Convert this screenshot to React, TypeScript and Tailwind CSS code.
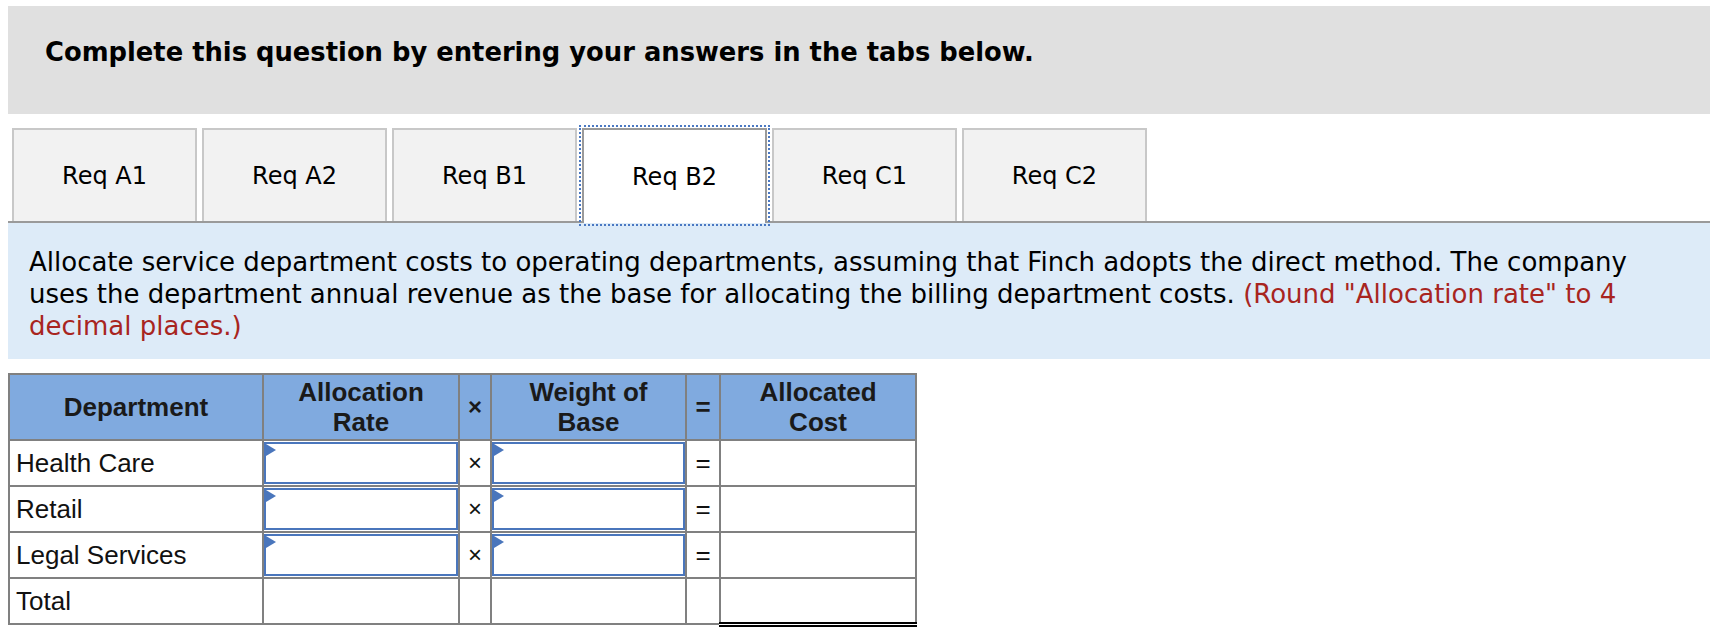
import { useState } from "react";

const tabs = ["Req A1", "Req A2", "Req B1", "Req B2", "Req C1", "Req C2"];
const rows = ["Health Care", "Retail", "Legal Services"];

const tahoma = { fontFamily: '"DejaVu Sans", Tahoma, sans-serif' };

function Flag() {
  return (
    <span className="absolute left-0 top-0 w-0 h-0 border-y-[6px] border-y-transparent border-l-[10px] border-l-[#4a76bc]" />
  );
}

function InputCell() {
  return (
    <td className="p-0 border-2 border-[#808080]">
      <div className="relative h-[42px] border-2 border-[#4a76bc] bg-white">
        <Flag />
        <input className="w-full h-full outline-none bg-transparent px-1" />
      </div>
    </td>
  );
}

export default function App() {
  const [active, setActive] = useState(3);

  return (
    <div className="min-h-screen bg-white pl-2 pr-3 pt-[6px] text-black">
      <div className="h-[108px] bg-[#e0e0e0] pt-[31px] pl-[37px]">
        <h1
          className="text-[25.8px] leading-[30px] font-bold"
          style={{ fontFamily: '"DejaVu Sans", Verdana, sans-serif' }}
        >
          Complete this question by entering your answers in the tabs below.
        </h1>
      </div>

      <div className="mt-[14px] flex gap-[5px] pl-[4px] border-b-2 border-[#9a9a9a]" style={tahoma}>
        {tabs.map((t, i) =>
          i === active ? (
            <button
              key={t}
              onClick={() => setActive(i)}
              className="w-[185px] h-[95px] -mb-[2px] bg-white border-2 border-b-0 border-[#9a9a9a] outline-2 outline-dotted outline-[#4a78c2] outline-offset-[1px] text-[24px] text-black"
            >
              {t}
            </button>
          ) : (
            <button
              key={t}
              onClick={() => setActive(i)}
              className="w-[185px] h-[93px] bg-[#f2f2f2] border-2 border-b-0 border-[#c8c8c8] text-[24px] text-black"
            >
              {t}
            </button>
          )
        )}
      </div>

      <div className="bg-[#ddebf8] pl-[21px] pr-[55px] pt-[23px] pb-[17px]" style={tahoma}>
        <p className="text-[26px] leading-[32px]">
          Allocate service department costs to operating departments, assuming that Finch adopts the
          direct method. The company uses the department annual revenue as the base for allocating the
          billing department costs.{" "}
          <span className="text-[#a8251f]">(Round "Allocation rate" to 4 decimal places.)</span>
        </p>
      </div>

      <table
        className="mt-[14px] w-[907px] table-fixed border-collapse text-[26px] text-[#111]"
        style={{ fontFamily: '"Liberation Sans", Arial, sans-serif' }}
      >
        <colgroup>
          <col className="w-[254px]" />
          <col className="w-[196px]" />
          <col className="w-[32px]" />
          <col className="w-[195px]" />
          <col className="w-[34px]" />
          <col className="w-[196px]" />
        </colgroup>
        <thead>
          <tr className="h-[66px] bg-[#80aadf] font-bold text-[#1a1a1a] leading-[30px]">
            <th className="border-2 border-[#808080]">Department</th>
            <th className="border-2 border-[#808080]">
              Allocation
              <br />
              Rate
            </th>
            <th className="border-2 border-[#808080] text-[24px]">×</th>
            <th className="border-2 border-[#808080]">
              Weight of
              <br />
              Base
            </th>
            <th className="border-2 border-[#808080]">=</th>
            <th className="border-2 border-[#808080]">
              Allocated
              <br />
              Cost
            </th>
          </tr>
        </thead>
        <tbody>
          {rows.map((r, i) => (
            <tr key={r} className="h-[46px]">
              <td className="border-2 border-[#808080] pl-[6px]">{r}</td>
              <InputCell />
              <td className="border-2 border-[#808080] text-center text-[24px]">×</td>
              <InputCell />
              <td className="border-2 border-[#808080] text-center">=</td>
              <td
                className={
                  i === rows.length - 1
                    ? "border-2 border-[#808080] border-b-black"
                    : "border-2 border-[#808080]"
                }
              />
            </tr>
          ))}
          <tr className="h-[46px]">
            <td className="border-2 border-[#808080] pl-[6px]">Total</td>
            <td className="border-2 border-[#808080]" />
            <td className="border-2 border-[#808080]" />
            <td className="border-2 border-[#808080]" />
            <td className="border-2 border-[#808080]" />
            <td className="border-2 border-[#808080] border-b-[5px] border-b-black border-double" />
          </tr>
        </tbody>
      </table>
    </div>
  );
}
